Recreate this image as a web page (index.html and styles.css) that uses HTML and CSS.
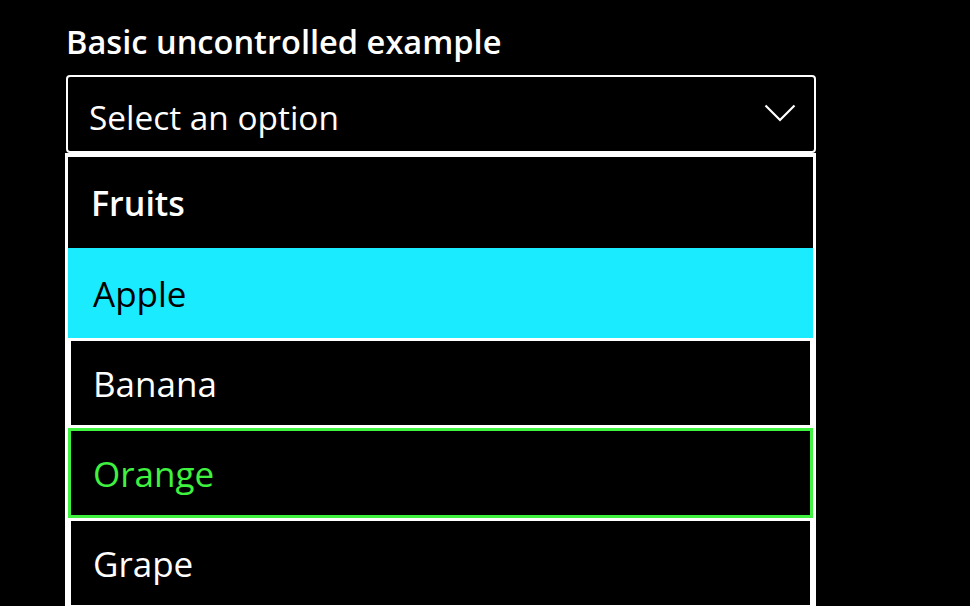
FILE: index.html
```html
<!DOCTYPE html>
<html lang="en">
<head>
<meta charset="utf-8">
<title>Dropdown</title>
<link rel="stylesheet" href="styles.css">
</head>
<body>
<div class="field">
  <label class="label">Basic uncontrolled example</label>
  <div class="dropdown">
    <span class="title">Select an option</span>
    <svg class="chevron" width="32" height="18" viewBox="0 0 32 18" aria-hidden="true">
      <polyline points="1.5,1.5 16,16 30.5,1.5" fill="none" stroke="#fff" stroke-width="2.2"/>
    </svg>
  </div>
  <div class="callout">
    <div class="header">Fruits</div>
    <div class="item selected">Apple</div>
    <div class="item">Banana</div>
    <div class="item disabled">Orange</div>
    <div class="item">Grape</div>
  </div>
</div>
</body>
</html>
```

FILE: styles.css
```css
html, body {
  margin: 0;
  padding: 0;
  background: #000;
  color: #fff;
  font-family: "Open Sans", "Noto Sans", sans-serif;
  overflow: hidden;
}

.field {
  margin-left: 66px;
  padding-top: 21px;
  width: 750px;
  display: flex;
  flex-direction: column;
}

.label {
  font-size: 32.6px;
  font-weight: 600;
  line-height: 42px;
  margin-bottom: 12px;
}

.dropdown {
  box-sizing: border-box;
  height: 78px;
  border: 2px solid #fff;
  border-radius: 4px;
  display: flex;
  align-items: center;
  justify-content: space-between;
  padding: 0 18px 0 21px;
}

.title {
  font-size: 33.4px;
  line-height: 40px;
  padding-top: 6px;
}

.chevron {
  display: block;
  margin-top: -2px;
}

.callout {
  margin-left: -1px;
  width: 751px;
  box-sizing: border-box;
  border: 3px solid #fff;
  border-top-width: 4px;
  display: flex;
  flex-direction: column;
}

.header {
  height: 91px;
  display: flex;
  align-items: center;
  padding-left: 23px;
  font-size: 34px;
  font-weight: 600;
}

.item {
  box-sizing: border-box;
  height: 90px;
  border: 3px solid #fff;
  display: flex;
  align-items: center;
  padding-left: 22px;
  font-size: 35px;
}

.item.selected {
  background: #1aebff;
  border-color: #1aebff;
  color: #000;
}

.item.disabled {
  border-color: #3ff23f;
  color: #3ff23f;
}
```
